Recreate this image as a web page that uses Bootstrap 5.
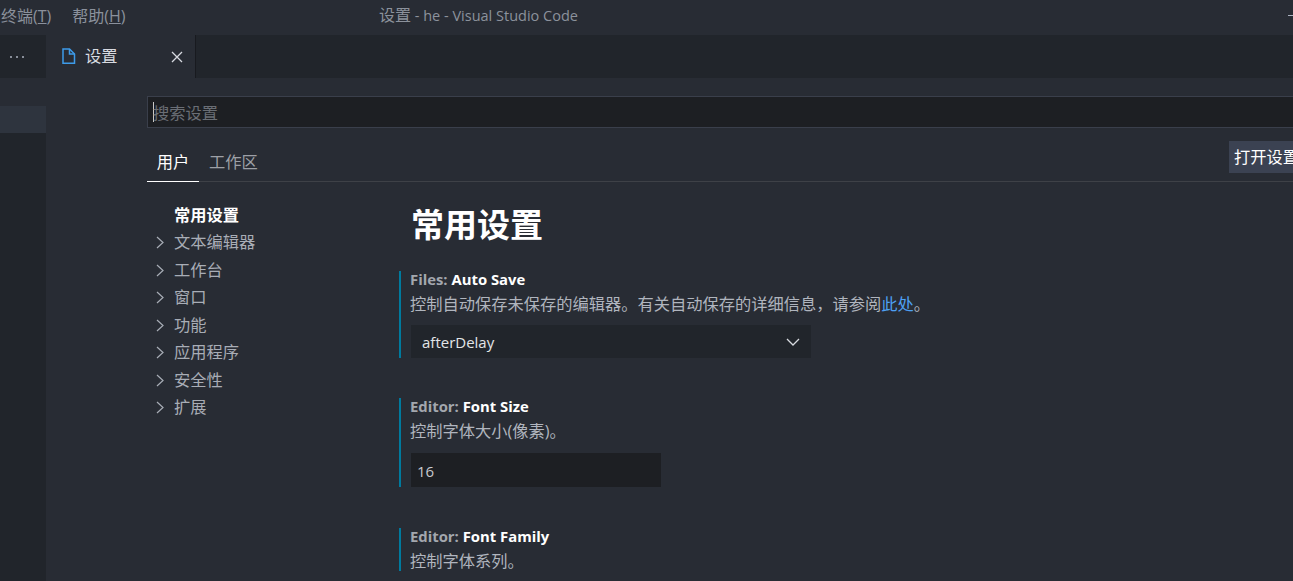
<!DOCTYPE html>
<html lang="zh-CN">
<head>
<meta charset="utf-8">
<title>设置 - he - Visual Studio Code</title>
<link href="https://cdn.jsdelivr.net/npm/bootstrap@5.3.0/dist/css/bootstrap.min.css" rel="stylesheet">
<style>
html,body{height:100%;overflow:hidden;}
body{background:#282c34;color:#abb2bf;font-family:"Open Sans","Noto Sans CJK SC",sans-serif;font-size:16.25px;}
.vs-shell{height:581px;width:1293px;overflow:hidden;}
.vs-title{height:35px;background:#282c34;color:#8b919c;font-size:16px;flex:none;position:relative;}
.vs-menu{padding-left:1px;gap:21px;line-height:33px;font-size:16px;}
.vs-wintitle{position:absolute;left:379px;top:0;line-height:31px;color:#8c929c;font-size:14.5px;}
.vs-zh{font-size:16px;}
.vs-min{position:absolute;left:1288px;top:15px;width:5px;height:1px;background:#abb2bf;}
.vs-tabs{height:43px;background:#21252b;flex:none;}
.vs-more{width:46px;color:#abb2bf;flex:none;padding-left:8px;}
.vs-tab{width:150px;background:#282c34;color:#d7dae0;font-size:16.25px;border-right:1px solid #181a1f;padding-left:15px;flex:none;height:100%;}
.vs-tabname{margin-left:9px;width:86px;}
.vs-strip{width:46px;flex:none;background:#21252b;padding-top:28px;position:relative;}
.vs-strip-top{position:absolute;left:0;top:0;width:46px;height:28px;background:#282c34;}
.vs-strip-sel{height:27px;background:#2e343e;}
.vs-main{padding-left:101px;min-width:0;flex:1;}
.vs-search{height:32px;margin-top:18px;width:1200px;background:#1d1f23;border:1px solid #3a3f4b;display:flex;align-items:center;padding-left:5px;font-size:16.25px;color:#6a6e75;}
.vs-search span:last-child{padding-top:3px;}
.vs-caret{width:1px;height:20px;background:#c8c8c8;flex:none;margin-right:-1px;}
.vs-tabrow{height:38px;margin-top:16px;border-bottom:1px solid #3e4147;width:1200px;position:relative;}
.vs-stab{font-size:16.25px;line-height:36px;height:38px;color:#9da0a6;}
.vs-stab-on{width:52px;text-align:center;color:#fff;border-bottom:1px solid #fff;}
.vs-stab-off{margin-left:10px;}
.vs-open{position:absolute;left:1082px;top:-3px;height:32px;width:100px;background:#3b4252;color:#fff;font-size:16.25px;line-height:32px;padding-left:5px;white-space:nowrap;}
.vs-toc{width:252px;flex:none;padding-top:19.5px;font-size:16.25px;}
.vs-tocitem{height:27.5px;line-height:27.5px;color:#a8adb6;display:flex;align-items:center;}
.vs-tocitem svg{width:13px;height:13px;margin-left:7px;margin-right:7px;flex:none;}
.vs-tocitem-on{color:#fff;font-weight:700;padding-left:27px;}
.vs-body{min-width:0;}
.vs-h{font-size:33px;font-weight:700;color:#fff;line-height:44px;margin:0 0 0 12px;padding-top:21px;height:71px;}
.vs-item{border-left:2px solid #007a9e;padding-left:9px;margin-top:18px;}
.vs-item+.vs-item{margin-top:40px;}
.vs-item:last-child{margin-top:41px;}
.vs-name{font-size:14.85px;line-height:16px;height:20px;font-weight:700;color:#a3a7ae;}
.vs-name b{color:#fff;font-weight:700;}
.vs-desc{font-size:16.25px;line-height:20px;margin-top:3px;color:#b0b5be;white-space:nowrap;}
.vs-desc a{color:#4ea1f3;text-decoration:none;}
.vs-select{margin:11px 0 0 1px;width:400px;height:33px;background:#21252b;color:#e3e5e8;font-size:15px;display:flex;align-items:center;justify-content:space-between;padding:0 10px 0 11px;}
.vs-select span{padding-top:1px;}
.vs-num{margin:12px 0 0 1px;width:250px;height:34px;background:#1d1f23;color:#c8cad0;font-size:15px;line-height:36px;padding-left:6px;}
</style>
</head>
<body>
<div class="vs-shell d-flex flex-column">
  <div class="vs-title d-flex">
    <div class="vs-menu d-flex"><span>终端(<u>T</u>)</span><span>帮助(<u>H</u>)</span></div>
    <div class="vs-wintitle"><span class="vs-zh">设置</span> - he - Visual Studio Code</div>
    <div class="vs-min"></div>
  </div>
  <div class="vs-tabs d-flex">
    <div class="vs-more d-flex align-items-center">
      <svg width="18" height="4" viewBox="0 0 18 4"><circle cx="3" cy="2" r="1" fill="#abb2bf"/><circle cx="9" cy="2" r="1" fill="#abb2bf"/><circle cx="15" cy="2" r="1" fill="#abb2bf"/></svg>
    </div>
    <div class="vs-tab d-flex align-items-center">
      <svg width="15" height="17" viewBox="0 0 15 17" fill="none" stroke="#3d9be9" stroke-width="1.5"><path d="M2 1h6.5L13.5 6v9.2H2z"/><path d="M8.5 1v5h5"/></svg>
      <span class="vs-tabname">设置</span>
      <svg width="12" height="12" viewBox="0 0 12 12" stroke="#d7dae0" stroke-width="1.3"><path d="M1 1l10 10M11 1L1 11"/></svg>
    </div>
  </div>
  <div class="d-flex flex-grow-1 overflow-hidden">
    <div class="vs-strip"><div class="vs-strip-top"></div><div class="vs-strip-sel"></div></div>
    <div class="vs-main">
      <div class="vs-search"><span class="vs-caret"></span><span>搜索设置</span></div>
      <div class="vs-tabrow d-flex">
        <div class="vs-stab vs-stab-on">用户</div>
        <div class="vs-stab vs-stab-off">工作区</div>
        <div class="vs-open">打开设置</div>
      </div>
      <div class="d-flex">
        <div class="vs-toc">
          <div class="vs-tocitem vs-tocitem-on">常用设置</div>
          <div class="vs-tocitem"><svg viewBox="0 0 13 13" fill="none" stroke="#a8adb6" stroke-width="1.2"><path d="M3 1l6 5.5L3 12"/></svg>文本编辑器</div>
          <div class="vs-tocitem"><svg viewBox="0 0 13 13" fill="none" stroke="#a8adb6" stroke-width="1.2"><path d="M3 1l6 5.5L3 12"/></svg>工作台</div>
          <div class="vs-tocitem"><svg viewBox="0 0 13 13" fill="none" stroke="#a8adb6" stroke-width="1.2"><path d="M3 1l6 5.5L3 12"/></svg>窗口</div>
          <div class="vs-tocitem"><svg viewBox="0 0 13 13" fill="none" stroke="#a8adb6" stroke-width="1.2"><path d="M3 1l6 5.5L3 12"/></svg>功能</div>
          <div class="vs-tocitem"><svg viewBox="0 0 13 13" fill="none" stroke="#a8adb6" stroke-width="1.2"><path d="M3 1l6 5.5L3 12"/></svg>应用程序</div>
          <div class="vs-tocitem"><svg viewBox="0 0 13 13" fill="none" stroke="#a8adb6" stroke-width="1.2"><path d="M3 1l6 5.5L3 12"/></svg>安全性</div>
          <div class="vs-tocitem"><svg viewBox="0 0 13 13" fill="none" stroke="#a8adb6" stroke-width="1.2"><path d="M3 1l6 5.5L3 12"/></svg>扩展</div>
        </div>
        <div class="vs-body">
          <h1 class="vs-h">常用设置</h1>
          <div class="vs-item">
            <div class="vs-name">Files: <b>Auto Save</b></div>
            <div class="vs-desc">控制自动保存未保存的编辑器。有关自动保存的详细信息，请参阅<a href="#">此处</a>。</div>
            <div class="vs-select"><span>afterDelay</span><svg width="16" height="16" viewBox="0 0 16 16" fill="none" stroke="#d7dae0" stroke-width="1.3"><path d="M2 5l6 6 6-6"/></svg></div>
          </div>
          <div class="vs-item">
            <div class="vs-name">Editor: <b>Font Size</b></div>
            <div class="vs-desc">控制字体大小(像素)。</div>
            <div class="vs-num">16</div>
          </div>
          <div class="vs-item">
            <div class="vs-name">Editor: <b>Font Family</b></div>
            <div class="vs-desc">控制字体系列。</div>
          </div>
        </div>
      </div>
    </div>
  </div>
</div>
<script src="https://cdn.jsdelivr.net/npm/bootstrap@5.3.0/dist/js/bootstrap.bundle.min.js"></script>
</body>
</html>
